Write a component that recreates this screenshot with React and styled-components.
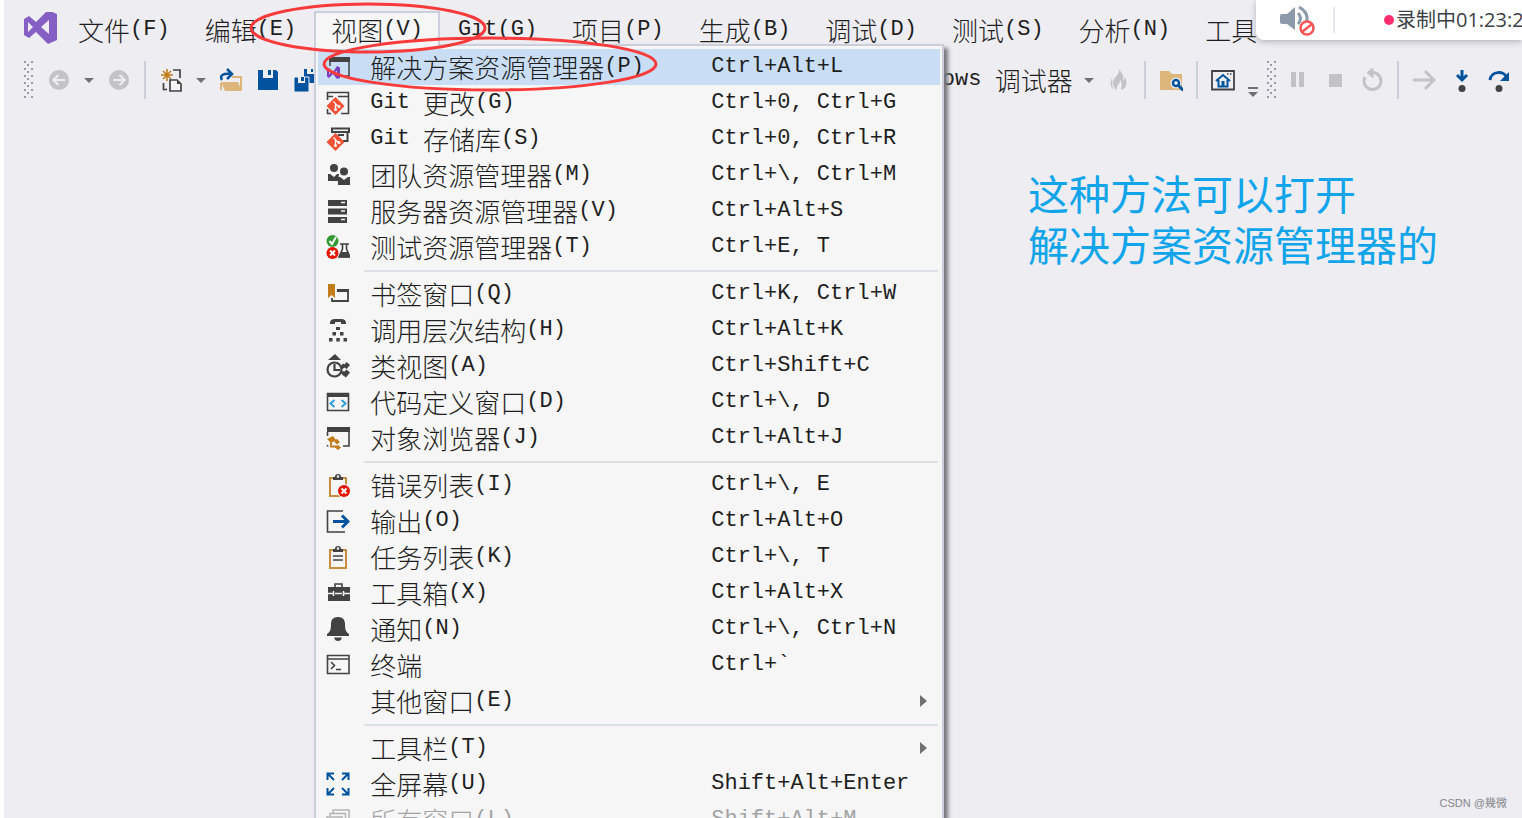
import { Fragment } from 'react'
import styled, { createGlobalStyle } from 'styled-components'

// #region styles
const GlobalStyle = createGlobalStyle`
  * {
    box-sizing: border-box;
  }

  body {
    margin: 0;
    background: #fff;
    overflow: hidden;
  }

  button {
    margin: 0;
    padding: 0;
    border: 0;
    background: none;
    color: inherit;
    font: inherit;
    cursor: pointer;
  }
`

const Window = styled.div`
  position: relative;
  height: 100vh;
  margin-left: 4px;
  padding: 11px 0 0 20px;
  overflow: hidden;
  background: #eeedf2;
  color: #1e1e1e;
  font-family: 'Liberation Mono', 'Noto Sans CJK SC', monospace;
  font-size: 22px;
  line-height: 36px;
  white-space: nowrap;
`

const Label = styled.span`
  display: flex;
  align-items: center;
  line-height: 32px;
  white-space: pre;
`

const Han = styled.span`
  font-family: 'Noto Sans CJK SC', sans-serif;
  font-size: 26px;
  font-weight: 300;
`

const Icon = styled.svg`
  display: block;
  flex: none;
  width: ${({ $size = 24 }) => $size}px;
  height: ${({ $size = 24 }) => $size}px;
`

const MenuBar = styled.nav`
  display: flex;
  align-items: center;
  gap: 1px;
`

const Brand = styled.div`
  width: 36px;
`

const MenuSlot = styled.div`
  position: relative;
`

const MenuTitle = styled.button`
  position: relative;
  z-index: ${({ $open }) => ($open ? 2 : 0)};
  display: block;
  height: 35px;
  padding: 0 15px;
  border: 2px solid ${({ $open }) => ($open ? '#cccedb' : 'transparent')};
  border-bottom: 0;
  background: ${({ $open }) => ($open ? '#f6f6f6' : 'transparent')};
`

const DropMenu = styled.div`
  position: absolute;
  z-index: 1;
  top: 33px;
  left: 0;
  width: 630px;
  padding: 3px 2px;
  border: 2px solid #cccedb;
  background: #f6f6f6;
  box-shadow: 4px 4px 4px #77777c;
`

const MenuRow = styled.button`
  display: grid;
  grid-template-columns: 24px 1fr 229px;
  align-items: center;
  gap: 20px;
  width: 100%;
  height: 36px;
  padding-left: 8px;
  background: ${({ $active }) => ($active ? '#c9def5' : 'transparent')};
  color: ${({ disabled }) => (disabled ? '#a2a4a5' : '#1e1e1e')};
  text-align: left;
`

const Shortcut = styled.span`
  display: flex;
  justify-content: ${({ $submenu }) => ($submenu ? 'flex-end' : 'flex-start')};
  padding-right: 13px;
`

const Divider = styled.hr`
  height: 2px;
  margin: 5px 2px 4px 46px;
  border: 0;
  background: #dde0e4;
`

const Arrow = styled.span`
  border: 6px solid transparent;
  border-right: 0;
  border-left: 7px solid #717171;
`

const Toolbar = styled.div`
  display: grid;
  grid-template-columns: 865px auto;
  height: 38px;
  margin-top: 15px;
`

const Tools = styled.div`
  display: flex;
  align-items: center;
  gap: ${({ $gap = 13 }) => $gap}px;
`

const Separator = styled.span`
  flex: none;
  width: 2px;
  height: 38px;
  background: #cccedb;
`

const Caret = styled.span`
  display: block;
  border: 5px solid transparent;
  border-top-color: #717171;
  border-bottom: 0;
`

const Overflow = styled.span`
  align-self: flex-end;
  display: block;
  margin-bottom: 2px;
  padding-top: 3px;
  border-top: 2px solid #717171;
`

const Grip = styled.span`
  width: 10px;
  height: 38px;
  background-image: radial-gradient(circle at 1px 1px, #9a9aa2 1px, transparent 1px),
    radial-gradient(circle at 4px 4px, #9a9aa2 1px, transparent 1px);
  background-size: 7px 7px;
`

const TargetButton = styled.button`
  display: flex;
  align-items: center;
  gap: 11px;
`

const Note = styled.p`
  margin: 68px 0 0 1004px;
  color: #10a5ea;
  font-family: 'Noto Sans CJK SC', sans-serif;
  font-size: 41px;
  line-height: 51px;
`

const Rings = styled.svg`
  position: absolute;
  z-index: 3;
  top: -11px;
  left: -75px;
  width: 430px;
  height: 100px;
  pointer-events: none;
`

const Recorder = styled.div`
  position: absolute;
  z-index: 4;
  top: 0;
  right: 0;
  display: flex;
  align-items: center;
  width: 266px;
  height: 40px;
  padding-left: 24px;
  overflow: hidden;
  border-bottom-left-radius: 8px;
  background: #fff;
  box-shadow: 0 2px 6px #b4b4ba;
  color: #3b3f46;
  font-family: 'Open Sans', 'Noto Sans CJK SC', sans-serif;
  font-size: 20px;
`

const RecorderRule = styled.span`
  flex: none;
  width: 2px;
  height: 26px;
  margin: 0 49px 0 17px;
  background: #e6e7f0;
`

const RecordDot = styled.span`
  flex: none;
  width: 10px;
  height: 10px;
  margin-right: 2px;
  border-radius: 50%;
  background: #ff2d6e;
`

const Credit = styled.footer`
  position: absolute;
  right: 15px;
  bottom: 6px;
  color: #85858a;
  font-family: 'Liberation Sans', 'Noto Sans CJK SC', sans-serif;
  font-size: 11px;
  line-height: 18px;
`
// #endregion

// #region icons
const DARK = '#424242'
const BLUE = '#00539c'
const GREY = '#c3c3c5'
const RED = '#e51400'
const TAN = '#dcb67a'

const gitDiamond = (
  <>
    <path d="M9.500 6 18.500 15 9.500 24 .5 15z" fill="#f05033" />
    <path d="M7.500 10.500 9.500 12.500V18M9.500 13l3 2.500" fill="none" stroke="#fff" strokeWidth="1.300" />
    <circle cx="9.500" cy="18.500" r="1.500" fill="#fff" />
    <circle cx="13" cy="15.500" r="1.500" fill="#fff" />
  </>
)

const clipboard = (
  <>
    <path d="M8 5H4v18h16V5h-4" fill="none" stroke="#c98b3c" strokeWidth="2" />
    <path d="M7 7V4h2a3 3 0 0 1 6 0h2v3z" fill={DARK} />
    <circle cx="12" cy="3.500" r="1.200" fill="#f6f6f6" />
  </>
)

const icons = {
  solution: (
    <>
      <path d="M3 2h21v5H3z" fill={DARK} />
      <path d="M4 7v4M23 7v14h-9" fill="none" stroke={DARK} strokeWidth="1.500" />
      <path d="M1 14.500 3 13l4 4 4-6 3 1.500V23l-3 1-4-5-4 4-2-1.500z" fill="#7a3fbf" />
      <path d="M3 16.500v3l1.500-1.500zM11 15.500v4L8.500 17.500z" fill="#c9def5" />
    </>
  ),
  gitChanges: (
    <>
      <path d="M1.500 9V1.500h21v21H15M1.500 18v4.500H5M1 5.500h6M12 5.500h10" fill="none" stroke={DARK} strokeWidth="1.600" />
      {gitDiamond}
    </>
  ),
  gitRepo: (
    <>
      <path d="M6 1.500h17v3.500H6zM21.500 5v9H17M12 8h6" fill="none" stroke={DARK} strokeWidth="2" />
      {gitDiamond}
    </>
  ),
  team: (
    <g fill={DARK}>
      <circle cx="8" cy="5" r="4" />
      <circle cx="18" cy="8.500" r="4" />
      <path d="M2 11h2l4 3 3-3h2l-1 7H2zM12 14h2l4 3 4-3h2v8H12z" />
    </g>
  ),
  server: (
    <>
      <path d="M2 1h19v6H2zM2 9.500h19v6H2zM2 18h19v6H2z" fill={DARK} />
      <path d="M15 3.500h4M15 12h4M15 20.500h4" stroke="#f6f6f6" strokeWidth="1.500" />
    </>
  ),
  test: (
    <>
      <circle cx="6.500" cy="6" r="6" fill="#339933" />
      <path d="M3.500 6 6 9l4-7" fill="none" stroke="#fff" strokeWidth="2" />
      <circle cx="6.500" cy="18" r="6" fill={RED} />
      <path d="m4 15.500 5 5m0-5-5 5" stroke="#fff" strokeWidth="2" />
      <path d="M14 9h9M16.500 9.500V14l-3.500 8h11l-3.500-8V9.500" fill="none" stroke={DARK} strokeWidth="1.600" />
      <path d="m15 17-2 5.500h11L22 17z" fill={DARK} />
    </>
  ),
  bookmark: (
    <>
      <path d="M2 2h7v14l-3.500-3L2 16z" fill="#c27d1a" />
      <path d="M12 8.500h10v10.500H6v-3" fill="none" stroke={DARK} strokeWidth="1.800" />
      <path d="M11 7h12v3H11z" fill={DARK} />
    </>
  ),
  callTree: (
    <g fill={DARK}>
      <path d="M4 5q0-4 5-4h6q5 0 5 4v1h-5V4H9v2H4zM10 9h4v3h-4zM6.500 14h3.500v3.500H6.500zM14 14h3.500v3.500H14zM3 20h3.500v3.500H3zM10.300 20h3.500v3.500h-3.500zM17.500 20H21v3.500h-3.500z" />
    </g>
  ),
  classView: (
    <>
      <path d="M9 0 15 6H2z" fill={DARK} />
      <circle cx="8.500" cy="15.500" r="7" fill="none" stroke={DARK} strokeWidth="2.200" />
      <path d="M8.500 10v6H14" fill="none" stroke={DARK} strokeWidth="2.200" />
      <path d="m20.500 8 3.500 3-3.500 4-2-1.500-2 1.500L15 12l2-2.500 1.500 1zM20.500 15.500l3.500 3-4 5-3.500-2.500-1.500-2.500 2-1.500 1.500.5z" fill={DARK} />
    </>
  ),
  codeWindow: (
    <>
      <path d="M1.500 3.500h21v17h-21z" fill="none" stroke={DARK} strokeWidth="1.600" />
      <path d="M1 3h22v4H1z" fill={DARK} />
      <path d="m8.500 10-4 3.500 4 3.500M15.500 10l4 3.500-4 3.500" fill="none" stroke="#2f9fe0" strokeWidth="2" />
    </>
  ),
  objectBrowser: (
    <>
      <path d="M1 1h23v5H1z" fill={DARK} />
      <path d="M1.500 6v4M23 6v14h-6M1.500 19v1.500" fill="none" stroke={DARK} strokeWidth="1.600" />
      <path d="m1 13 6-3 3 4-5 3zM11 13l3 3-3 2.500L8.500 16zM12 19l3 2.500-3 2.500-3-2.500z" fill="#c27d1a" />
      <path d="M5 14v6.500h6M8 14.500h4" fill="none" stroke="#c27d1a" strokeWidth="1.800" />
    </>
  ),
  errors: (
    <>
      {clipboard}
      <circle cx="18" cy="18" r="7" fill="#f6f6f6" />
      <circle cx="18" cy="18" r="6" fill={RED} />
      <path d="m15.500 15.500 5 5m0-5-5 5" stroke="#fff" strokeWidth="2" />
    </>
  ),
  output: (
    <>
      <path d="M17 2H1.500v21H19" fill="none" stroke={DARK} strokeWidth="1.600" />
      <path d="M7 12.500h15M16 6.500l6 6-6 6" fill="none" stroke={BLUE} strokeWidth="3" />
    </>
  ),
  tasks: (
    <>
      {clipboard}
      <path d="M7 11h10M7 15h10" stroke={DARK} strokeWidth="1.500" />
    </>
  ),
  toolbox: (
    <>
      <path d="M9 6V3h7v3" fill="none" stroke={DARK} strokeWidth="1.600" />
      <path d="M2 6h22v14H2z" fill={DARK} />
      <path d="M2 12.500h5M9 12.500h7M18 12.500h6M7.500 10v5M17.500 10v5" stroke="#f6f6f6" strokeWidth="1.500" />
    </>
  ),
  bell: (
    <path d="M12 0c5 0 7 3 7 7 0 6 1 8 4 10v2H1v-2c3-2 4-4 4-10 0-4 2-7 7-7zM8 20.500h8q-1 3.500-4 3.500t-4-3.500z" fill={DARK} />
  ),
  terminal: (
    <>
      <path d="M1.500 2.500h21.500v18H1.500zM1 6h22" fill="none" stroke={DARK} strokeWidth="1.600" />
      <path d="m5 9 3.500 3.500L5 16M10 16.500h5" fill="none" stroke={DARK} strokeWidth="1.600" />
    </>
  ),
  fullScreen: (
    <path
      d="M1.500 8V1.500H8M2 2l6 6M16 1.500h6.500V8M22 2l-6 6M1.500 16v6.500H8M2 22l6-6M16 22.500h6.500V16M22 22l-6-6"
      fill="none"
      stroke={BLUE}
      strokeWidth="2"
    />
  ),
  windows: (
    <path d="M7 5V2h16v13h-3M4 9V5.500h15.500V19H17M1 9h15v13H1z" fill="none" stroke="#b5b5b7" strokeWidth="1.500" />
  ),
  back: (
    <>
      <circle cx="12" cy="12" r="10" fill={GREY} />
      <path d="M18 12H7M11.500 7l-5 5 5 5" fill="none" stroke="#eeedf2" strokeWidth="2.200" />
    </>
  ),
  forward: (
    <>
      <circle cx="12" cy="12" r="10" fill={GREY} />
      <path d="M6 12h11M12.500 7l5 5-5 5" fill="none" stroke="#eeedf2" strokeWidth="2.200" />
    </>
  ),
  newProject: (
    <>
      <path d="M8 1v12M2 7h12M4 3l8 8M12 3l-8 8" stroke="#c27d1a" strokeWidth="1.600" />
      <path d="M14 2h7v8M4.500 15v6.500H8" fill="none" stroke={DARK} strokeWidth="1.700" />
      <path d="M11 12h7l4 4v7H11z" fill="#f6f6f6" stroke={DARK} strokeWidth="1.700" />
      <path d="M18 12v4h4z" fill={DARK} />
    </>
  ),
  open: (
    <>
      <path d="M13 9h9v13" fill="none" stroke={TAN} strokeWidth="2" />
      <path d="M2 14h17l4 9H6z" fill={TAN} />
      <path d="M2 15v7" stroke={TAN} strokeWidth="2" />
      <path d="M3 12c-3-5 2-7 9-6M8 1l5 5-5 5" fill="none" stroke={BLUE} strokeWidth="2.500" />
    </>
  ),
  save: (
    <>
      <path d="M2 2h18l2 2v18H2z" fill={BLUE} />
      <path d="M7 2h10v8H7z" fill="#eeedf2" />
      <path d="M12 2h3v5h-3z" fill={BLUE} />
    </>
  ),
  saveAll: (
    <>
      <path d="M11 1h13v14H11z" fill={BLUE} />
      <path d="M14 1h8v5h-8z" fill="#eeedf2" />
      <path d="M18 1h2v3h-2z" fill={BLUE} />
      <path d="M1 9h15v15H1z" fill={BLUE} stroke="#eeedf2" />
      <path d="M5 9h7v6H5z" fill="#eeedf2" />
      <path d="M8 9h3v4H8z" fill={BLUE} />
    </>
  ),
  flame: (
    <path d="M12 2c1 5-6 7-6 13 0 3 2 6 4 7-1-5 3-5 3-10 2 2 2 6 1 10 5-1 7-6 4-13-1 2-1 3-2 4 1-5-1-9-4-11zM5 10c-2 4-2 9 2 12-3-5-1-7-2-12z" fill={GREY} />
  ),
  folderSearch: (
    <>
      <path d="M1 3h9l3 3h10v16H1z" fill={TAN} />
      <circle cx="17" cy="15" r="5.500" fill="#eeedf2" />
      <circle cx="17" cy="15" r="3" fill="#fff" stroke={BLUE} strokeWidth="2.500" />
      <path d="m19.500 17.500 5 5" stroke={BLUE} strokeWidth="3" />
    </>
  ),
  home: (
    <>
      <path d="M1 3h22v18.500H1z" fill="none" stroke={DARK} strokeWidth="1.800" />
      <path d="M16 6h1.500M19 6h1.500" stroke={DARK} strokeWidth="1.500" />
      <path d="m5 13 7-6 7 6M7.500 12v6.500h9V12" fill="none" stroke={BLUE} strokeWidth="2" />
      <path d="M10.500 13h3v6h-3z" fill={BLUE} />
    </>
  ),
  pause: <path d="M5 4h5v15H5zM13 4h5v15h-5z" fill={GREY} />,
  stop: <path d="M6 6h13v13H6z" fill={GREY} />,
  restart: (
    <>
      <path d="M5 9a8.500 8.500 0 1 0 8-4.500H8" fill="none" stroke={GREY} strokeWidth="3" />
      <path d="M13 0 7 4.500 13 10z" fill={GREY} stroke={GREY} />
    </>
  ),
  next: <path d="M1 12h21M13 3l9 9-9 9" fill="none" stroke={GREY} strokeWidth="3" />,
  stepInto: (
    <>
      <path d="M13 2v10M8 7l5 5 5-5" fill="none" stroke={BLUE} strokeWidth="3" />
      <circle cx="13" cy="20.500" r="3.500" fill={DARK} />
    </>
  ),
  stepOver: (
    <>
      <path d="M4 12c1-9 14-10 17-2" fill="none" stroke={BLUE} strokeWidth="3" />
      <path d="M23 4v9h-9z" fill={BLUE} />
      <circle cx="13" cy="20.500" r="3.500" fill={DARK} />
    </>
  ),
}
// #endregion

const titles = ['文件(F)', '编辑(E)', '视图(V)', 'Git(G)', '项目(P)', '生成(B)', '调试(D)', '测试(S)', '分析(N)', '工具(T)']

const groups = [
  [
    { icon: 'solution', label: '解决方案资源管理器(P)', keys: 'Ctrl+Alt+L', active: true },
    { icon: 'gitChanges', label: 'Git 更改(G)', keys: 'Ctrl+0, Ctrl+G' },
    { icon: 'gitRepo', label: 'Git 存储库(S)', keys: 'Ctrl+0, Ctrl+R' },
    { icon: 'team', label: '团队资源管理器(M)', keys: 'Ctrl+\\, Ctrl+M' },
    { icon: 'server', label: '服务器资源管理器(V)', keys: 'Ctrl+Alt+S' },
    { icon: 'test', label: '测试资源管理器(T)', keys: 'Ctrl+E, T' },
  ],
  [
    { icon: 'bookmark', label: '书签窗口(Q)', keys: 'Ctrl+K, Ctrl+W' },
    { icon: 'callTree', label: '调用层次结构(H)', keys: 'Ctrl+Alt+K' },
    { icon: 'classView', label: '类视图(A)', keys: 'Ctrl+Shift+C' },
    { icon: 'codeWindow', label: '代码定义窗口(D)', keys: 'Ctrl+\\, D' },
    { icon: 'objectBrowser', label: '对象浏览器(J)', keys: 'Ctrl+Alt+J' },
  ],
  [
    { icon: 'errors', label: '错误列表(I)', keys: 'Ctrl+\\, E' },
    { icon: 'output', label: '输出(O)', keys: 'Ctrl+Alt+O' },
    { icon: 'tasks', label: '任务列表(K)', keys: 'Ctrl+\\, T' },
    { icon: 'toolbox', label: '工具箱(X)', keys: 'Ctrl+Alt+X' },
    { icon: 'bell', label: '通知(N)', keys: 'Ctrl+\\, Ctrl+N' },
    { icon: 'terminal', label: '终端', keys: 'Ctrl+`' },
    { label: '其他窗口(E)', submenu: true },
  ],
  [
    { label: '工具栏(T)', submenu: true },
    { icon: 'fullScreen', label: '全屏幕(U)', keys: 'Shift+Alt+Enter' },
    { icon: 'windows', label: '所有窗口(L)', keys: 'Shift+Alt+M', disabled: true },
  ],
]

// Chinese glyphs are set larger than the Latin ones, so that two Latin cells fill one of theirs
const Mixed = ({ text }) => (
  <Label>
    {text
      .split(/([\u4e00-\u9fff]+)/)
      .filter(Boolean)
      .map((part, i) => (/[\u4e00-\u9fff]/.test(part) ? <Han key={i}>{part}</Han> : <span key={i}>{part}</span>))}
  </Label>
)

const Glyph = ({ name }) => (
  <Icon viewBox="0 0 24 24" aria-hidden="true">
    {icons[name]}
  </Icon>
)

const Tool = ({ name, label }) => (
  <button type="button" aria-label={label}>
    <Glyph name={name} />
  </button>
)

const ViewMenu = () => (
  <DropMenu role="menu">
    {groups.map((rows, i) => (
      <Fragment key={i}>
        {i > 0 && <Divider />}
        {rows.map((row) => (
          <MenuRow key={row.label} type="button" role="menuitem" $active={row.active} disabled={row.disabled}>
            {row.icon ? <Glyph name={row.icon} /> : <span />}
            <Mixed text={row.label} />
            <Shortcut $submenu={row.submenu}>{row.submenu ? <Arrow /> : row.keys}</Shortcut>
          </MenuRow>
        ))}
      </Fragment>
    ))}
  </DropMenu>
)

export default function App() {
  return (
    <Window>
      <GlobalStyle />
      <MenuBar>
        <Brand>
          <Icon $size={34} viewBox="0 2 34 34" aria-hidden="true">
            <path
              fillRule="evenodd"
              fill="#865fc5"
              d="M24 0 33 4v26l-9 4-12-12-7 6-5-3V9l5-3 7 6zM4 12v10l5-5zM25 10l-8 7 8 7z"
            />
          </Icon>
        </Brand>
        {titles.map((title) => {
          const open = title === '视图(V)'
          return (
            <MenuSlot key={title}>
              <MenuTitle type="button" $open={open}>
                <Mixed text={title} />
              </MenuTitle>
              {open && (
                <>
                  <ViewMenu />
                  <Rings viewBox="0 0 430 100" fill="none" stroke="#f93a3a" strokeWidth="3" aria-hidden="true">
                    <ellipse cx="129" cy="28" rx="117" ry="24" />
                    <ellipse cx="251" cy="64" rx="166" ry="26" />
                  </Rings>
                </>
              )}
            </MenuSlot>
          )
        })}
      </MenuBar>

      <Toolbar>
        <Tools>
          <Grip />
          <Tool name="back" label="后退" />
          <Caret />
          <Tool name="forward" label="前进" />
          <Separator />
          <Tool name="newProject" label="新建项目" />
          <Caret />
          <Tool name="open" label="打开文件" />
          <Tool name="save" label="保存" />
          <Tool name="saveAll" label="全部保存" />
        </Tools>
        <Tools>
          <TargetButton type="button">
            <Mixed text="Windows 调试器" />
            <Caret />
          </TargetButton>
          <Tool name="flame" label="热重载" />
          <Separator />
          <Tool name="folderSearch" label="在文件中查找" />
          <Separator />
          <Tool name="home" label="主页" />
          <Tools $gap={9}>
            <Overflow>
              <Caret />
            </Overflow>
            <Grip />
            <Tool name="pause" label="暂停" />
          </Tools>
          <Tool name="stop" label="停止" />
          <Tool name="restart" label="重新启动" />
          <Separator />
          <Tool name="next" label="下一语句" />
          <Tool name="stepInto" label="逐语句" />
          <Tool name="stepOver" label="逐过程" />
        </Tools>
      </Toolbar>

      <Note>
        这种方法可以打开
        <br />
        解决方案资源管理器的
      </Note>

      <Recorder>
        <Icon $size={36} viewBox="0 0 36 36" aria-hidden="true">
          <path d="M0 14q0-2 2-2h5l8-7v23l-8-6H2q-2 0-2-2z" fill="#8d9aab" />
          <path d="M18 11q5 5 0 11M19 5q11 6 7 17" fill="none" stroke="#8d9aab" strokeWidth="3" />
          <circle cx="27" cy="26" r="6.500" fill="#fff" stroke="#fa5555" strokeWidth="2.500" />
          <path d="m22.500 29.500 9-7" stroke="#fa5555" strokeWidth="2.500" />
        </Icon>
        <RecorderRule />
        <RecordDot />
        录制中01:23:2
      </Recorder>

      <Credit>CSDN @幾微</Credit>
    </Window>
  )
}
